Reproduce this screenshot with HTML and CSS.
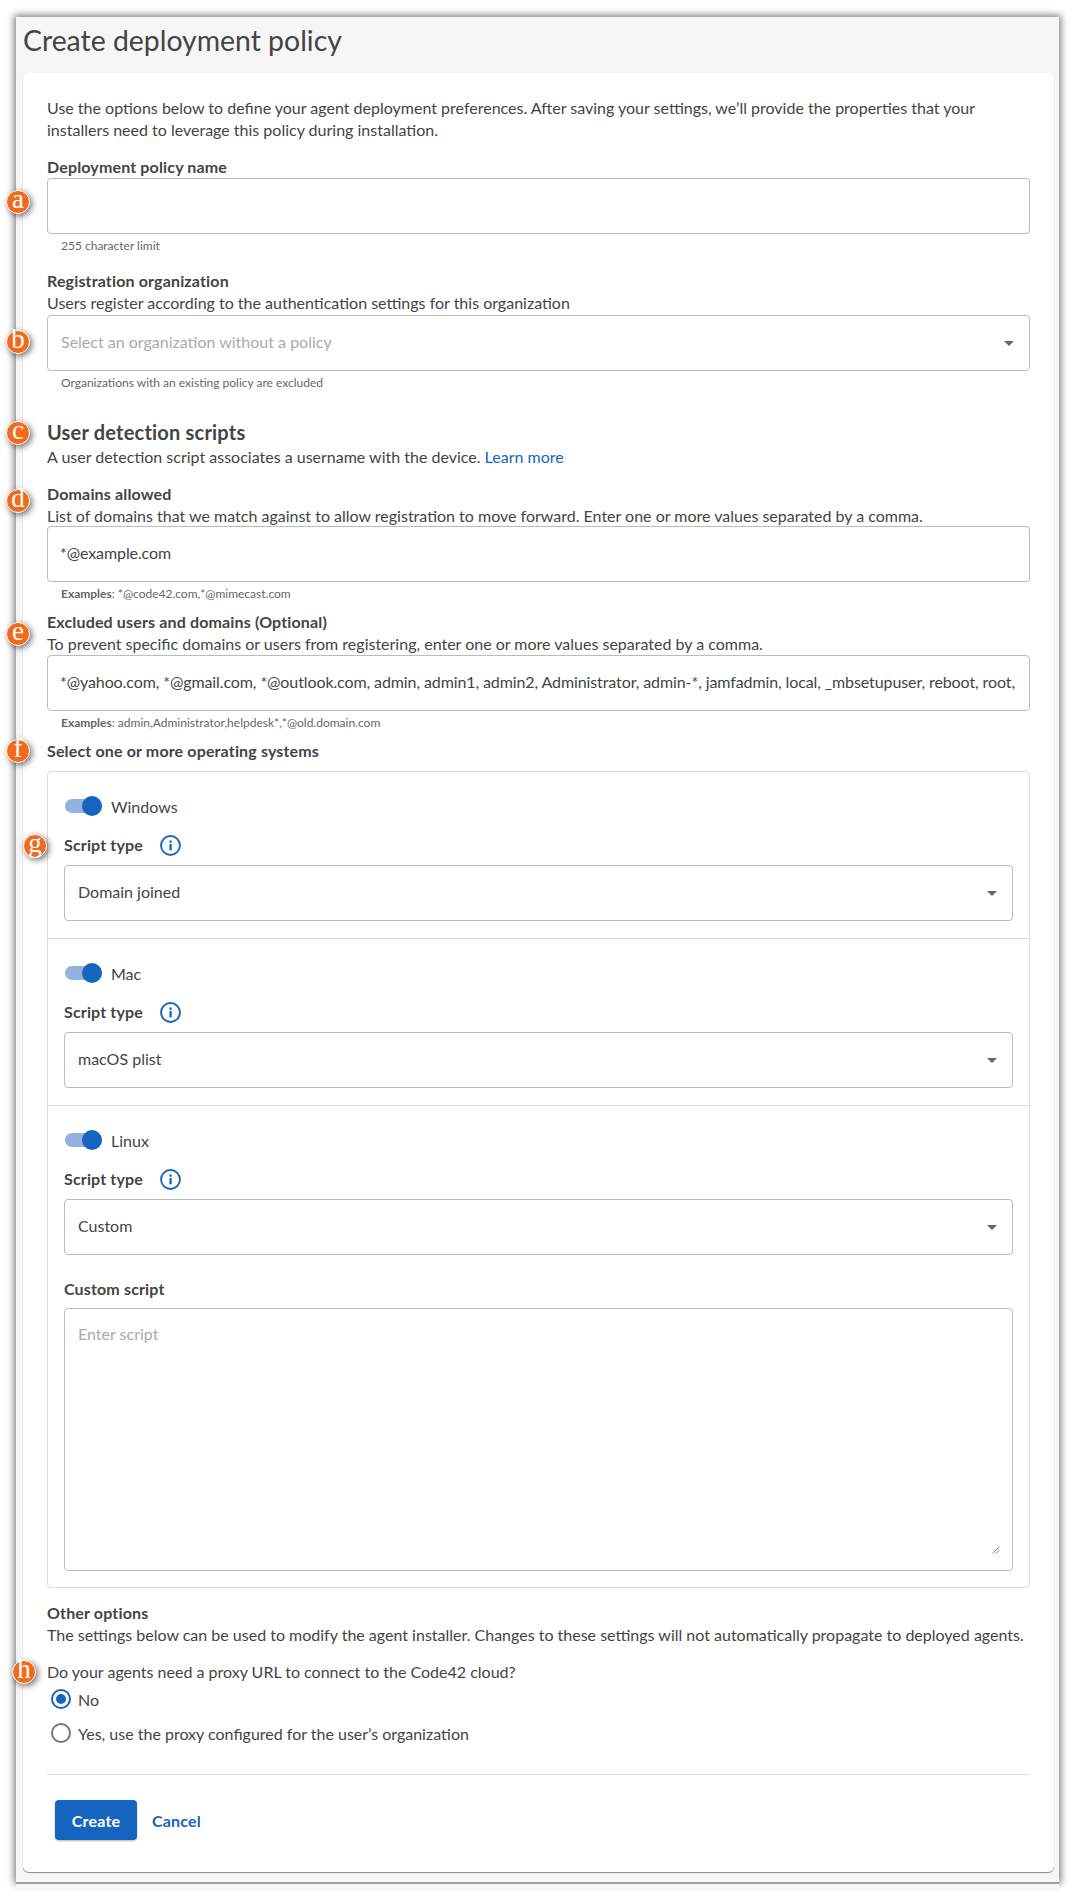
FILE: index.html
```html
<!DOCTYPE html>
<html lang="en">

<head>
    <meta charset="UTF-8">
    <meta name="viewport" content="width=device-width, initial-scale=1.0">
    <title>Create deployment policy</title>
    <link rel="stylesheet" href="styles.css">
</head>

<body>

    <div class="window">
        <h1 class="page-title">Create deployment policy</h1>

        <div class="card">
            <p class="intro">Use the options below to define your agent deployment preferences. After saving your settings, we’ll provide the properties that your installers need to leverage this policy during installation.</p>

            <div class="field field-name">
                <label class="label">Deployment policy name</label>
                <input class="input" type="text">
                <div class="hint">255 character limit</div>
            </div>

            <div class="field field-org">
                <label class="label">Registration organization</label>
                <div class="help">Users register according to the authentication settings for this organization</div>
                <div class="input select placeholder">Select an organization without a policy<span class="caret"></span></div>
                <div class="hint">Organizations with an existing policy are excluded</div>
            </div>

            <div class="section-head">
                <h2>User detection scripts</h2>
                <div class="help">A user detection script associates a username with the device. <a href="#">Learn more</a></div>
            </div>

            <div class="field field-domains">
                <label class="label">Domains allowed</label>
                <div class="help">List of domains that we match against to allow registration to move forward. Enter one or more values separated by a comma.</div>
                <input class="input" type="text" value="*@example.com">
                <div class="hint"><b>Examples</b>: *@code42.com,*@mimecast.com</div>
            </div>

            <div class="field field-excluded">
                <label class="label">Excluded users and domains (Optional)</label>
                <div class="help">To prevent specific domains or users from registering, enter one or more values separated by a comma.</div>
                <input class="input" type="text" value="*@yahoo.com, *@gmail.com, *@outlook.com, admin, admin1, admin2, Administrator, admin-*, jamfadmin, local, _mbsetupuser, reboot, root, shutdown, sysadmin, test, user">
                <div class="hint"><b>Examples</b>: admin,Administrator,helpdesk*,*@old.domain.com</div>
            </div>

            <label class="label os-label">Select one or more operating systems</label>

            <div class="os-panel">
                <div class="os-row">
                    <div class="toggle-row"><span class="toggle"></span>Windows</div>
                    <div class="label script-label">Script type
                        <svg class="info" viewBox="0 0 20 20"><circle cx="10" cy="10" r="9"/><rect class="info-mark" x="9" y="8.6" width="2.2" height="6"/><rect class="info-mark" x="9" y="5.2" width="2.2" height="2.2"/></svg>
                    </div>
                    <div class="input select">Domain joined<span class="caret"></span></div>
                </div>
                <div class="os-row">
                    <div class="toggle-row"><span class="toggle"></span>Mac</div>
                    <div class="label script-label">Script type
                        <svg class="info" viewBox="0 0 20 20"><circle cx="10" cy="10" r="9"/><rect class="info-mark" x="9" y="8.6" width="2.2" height="6"/><rect class="info-mark" x="9" y="5.2" width="2.2" height="2.2"/></svg>
                    </div>
                    <div class="input select">macOS plist<span class="caret"></span></div>
                </div>
                <div class="os-row">
                    <div class="toggle-row"><span class="toggle"></span>Linux</div>
                    <div class="label script-label">Script type
                        <svg class="info" viewBox="0 0 20 20"><circle cx="10" cy="10" r="9"/><rect class="info-mark" x="9" y="8.6" width="2.2" height="6"/><rect class="info-mark" x="9" y="5.2" width="2.2" height="2.2"/></svg>
                    </div>
                    <div class="input select">Custom<span class="caret"></span></div>
                    <label class="label custom-label">Custom script</label>
                    <div class="script-wrap">
                        <textarea class="script-box" placeholder="Enter script"></textarea>
                        <svg class="grip" viewBox="0 0 8 8"><path d="M0.5 7.5L7.5 0.5M4 7.5L7.5 4"/></svg>
                    </div>
                </div>
            </div>

            <div class="other">
                <label class="label">Other options</label>
                <div class="help">The settings below can be used to modify the agent installer. Changes to these settings will not automatically propagate to deployed agents.</div>
            </div>

            <div class="question">Do your agents need a proxy URL to connect to the Code42 cloud?</div>
            <div class="radio-row"><span class="radio checked"></span>No</div>
            <div class="radio-row"><span class="radio"></span>Yes, use the proxy configured for the user’s organization</div>

            <div class="actions">
                <button class="btn-primary">Create</button>
                <a class="btn-link" href="#">Cancel</a>
            </div>
        </div>

        <!-- Callout letters -->
        <span class="badge badge-a">a</span>
        <span class="badge badge-b">b</span>
        <span class="badge badge-c">c</span>
        <span class="badge badge-d">d</span>
        <span class="badge badge-e">e</span>
        <span class="badge badge-f">f</span>
        <span class="badge badge-g">g</span>
        <span class="badge badge-h">h</span>
    </div>

</body>

</html>
```

FILE: styles.css
```css
* {
    box-sizing: border-box;
}

body {
    margin: 0;
    padding: 17px 16px 15px 16px;
    background-color: #fff;
    font-family: Lato, sans-serif;
    font-size: 16px;
    color: #444;
}

.window {
    position: relative;
    height: 1865px;
    padding: 0 5px 0 7px;
    background-color: #f6f6f6;
    box-shadow: 0 0 7px 2px rgba(0, 0, 0, 0.5);
}

/* second sheet peeking out below the window */
.window::after {
    content: "";
    position: absolute;
    left: 0;
    right: 0;
    top: 100%;
    height: 5px;
    border-top: 2px solid #a0a0a0;
    background: #f7f7f7;
}

.page-title {
    margin: 0;
    height: 56px;
    font-size: 28.4px;
    font-weight: 400;
    line-height: 46px;
    color: #444;
}

.card {
    height: 1799px;
    padding: 24px 24px 0;
    background: #fff;
    border-radius: 6px;
    box-shadow: 0 1px 1px rgba(0, 0, 0, 0.45);
}

.intro {
    margin: 0 0 15px;
    line-height: 22px;
}

.label {
    display: block;
    font-weight: 700;
    line-height: 22px;
    letter-spacing: 0.15px;
}

.help {
    line-height: 21px;
}

.help a {
    color: #1565c0;
    text-decoration: none;
}

.input {
    display: block;
    width: 100%;
    height: 56px;
    padding: 0 12px 3px;
    border: 1px solid #bbb;
    border-radius: 4px;
    background: #fff;
    font-family: inherit;
    font-size: 16px;
    letter-spacing: -0.1px;
    color: #444;
    outline: none;
}

.select {
    position: relative;
    display: flex;
    align-items: center;
    padding-left: 13px;
    letter-spacing: 0;
}

.placeholder {
    color: #aaa;
}

.caret {
    position: absolute;
    right: 15px;
    top: 25px;
    border-left: 5.5px solid transparent;
    border-right: 5.5px solid transparent;
    border-top: 5.5px solid #666;
}

.hint {
    margin-top: 4px;
    padding-left: 14px;
    font-size: 12px;
    line-height: 16px;
    color: #666;
}

.field-org {
    margin-top: 16px;
}

.field-org .help {
    margin-bottom: 2px;
}

.section-head {
    margin-top: 27px;
}

.section-head h2 {
    margin: 0;
    font-size: 20px;
    font-weight: 700;
    line-height: 28px;
    letter-spacing: 0.2px;
}

.field-domains {
    margin-top: 16px;
}

.field-excluded {
    margin-top: 9px;
}

.field-excluded .help {
    margin-bottom: 1px;
}

.os-label {
    margin-top: 9px;
}

.os-panel {
    margin-top: 9px;
    border: 1px solid #ddd;
    border-radius: 4px;
}

.os-row {
    padding: 23px 16px 17px;
    border-bottom: 1px solid #ddd;
}

.os-row:last-child {
    padding-bottom: 16px;
    border-bottom: 0;
}

.toggle-row {
    display: flex;
    align-items: center;
    height: 22px;
    gap: 9px;
    padding-left: 1px;
}

.toggle {
    position: relative;
    width: 37px;
    height: 14px;
    border-radius: 7px;
    background: #93b2df;
}

.toggle::after {
    content: "";
    position: absolute;
    right: 0;
    top: -3px;
    width: 20px;
    height: 20px;
    border-radius: 50%;
    background: #1565c0;
}

.script-label {
    display: flex;
    align-items: center;
    gap: 17px;
    margin: 17px 0 9px;
}

.info {
    width: 21px;
    height: 21px;
}

.info circle {
    fill: none;
    stroke: #1565c0;
    stroke-width: 1.8;
}

.info-mark {
    fill: #1565c0;
}

.custom-label {
    margin-top: 23px;
    margin-bottom: 8px;
}

.script-wrap {
    position: relative;
}

.script-box {
    display: block;
    width: 100%;
    height: 263px;
    padding: 15px 13px;
    border: 1px solid #bbb;
    border-radius: 4px;
    font-family: inherit;
    font-size: 16px;
    color: #444;
    outline: none;
    resize: none;
}

.script-box::placeholder {
    color: #aaa;
}

.grip {
    position: absolute;
    right: 13px;
    bottom: 17px;
    width: 8px;
    height: 8px;
}

.grip path {
    fill: none;
    stroke: #666;
    stroke-width: 0.8;
}

.other {
    margin-top: 14px;
}

.question {
    margin-top: 16px;
    line-height: 22px;
}

.radio-row {
    display: flex;
    align-items: center;
    gap: 7px;
    height: 22px;
    margin: 5px 0 0 4px;
}

.radio-row + .radio-row {
    margin-top: 12px;
}

.radio {
    position: relative;
    width: 20px;
    height: 20px;
    border: 2px solid #777;
    border-radius: 50%;
}

.radio.checked {
    border-color: #1565c0;
}

.radio.checked::after {
    content: "";
    position: absolute;
    left: 3px;
    top: 3px;
    width: 10px;
    height: 10px;
    border-radius: 50%;
    background: #1565c0;
}

.actions {
    display: flex;
    align-items: center;
    gap: 15px;
    margin-top: 30px;
    padding: 25px 0 0 8px;
    border-top: 1px solid #ddd;
}

.btn-primary {
    width: 82px;
    height: 40px;
    border: none;
    border-radius: 4px;
    background: #1565c0;
    color: #fff;
    font-family: inherit;
    font-size: 16px;
    font-weight: 700;
    letter-spacing: 0.2px;
    box-shadow: 0 1px 2px rgba(0, 0, 0, 0.3);
}

.btn-link {
    color: #1565c0;
    font-weight: 700;
    letter-spacing: 0.2px;
    text-decoration: none;
}

.badge {
    position: absolute;
    width: 24px;
    height: 24px;
    border: 1.5px solid #fff;
    border-radius: 50%;
    background: #f26a1c;
    color: #fff;
    font-family: "Liberation Serif", serif;
    font-size: 27px;
    line-height: 16px;
    text-align: center;
    box-shadow: 2px 2px 6px rgba(0, 0, 0, 0.55);
}

.badge-a { left: -10px; top: 173px; }
.badge-b { left: -10px; top: 313px; }
.badge-c { left: -10px; top: 404px; }
.badge-d { left: -10px; top: 472px; }
.badge-e { left: -10px; top: 605px; }
.badge-f { left: -10px; top: 722px; }
.badge-g { left: 7px; top: 817px; }
.badge-h { left: -4px; top: 1643px; }
```
